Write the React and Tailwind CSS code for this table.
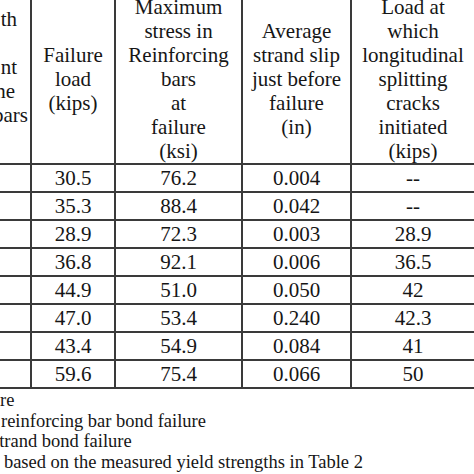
import React from "react";

const header = [
  ["Failure", "load", "(kips)"],
  ["Maximum", "stress in", "Reinforcing", "bars", "at", "failure", "(ksi)"],
  ["Average", "strand slip", "just before", "failure", "(in)"],
  ["Load at", "which", "longitudinal", "splitting", "cracks", "initiated", "(kips)"],
];

// tails of the first column, which runs off the left edge
const firstCol = [
  ["th", "pr-[13px]"],
  ["\u00a0", ""],
  ["nt", "pr-[13px]"],
  ["ne", "pr-[15px]"],
  ["bars", "pr-[2px]"],
  ["\u00a0", ""],
];

const rows = [
  ["30.5", "76.2", "0.004", "--"],
  ["35.3", "88.4", "0.042", "--"],
  ["28.9", "72.3", "0.003", "28.9"],
  ["36.8", "92.1", "0.006", "36.5"],
  ["44.9", "51.0", "0.050", "42"],
  ["47.0", "53.4", "0.240", "42.3"],
  ["43.4", "54.9", "0.084", "41"],
  ["59.6", "75.4", "0.066", "50"],
];

const cols = "grid grid-cols-[32px_84px_127px_109px_124px]";
const line = "border-[#3a3a3a]";

export default function App() {
  return (
    <div
      className="w-[474px] h-[474px] overflow-hidden bg-white text-[#161616]"
      style={{ fontFamily: '"Liberation Serif", "Times New Roman", serif' }}
    >
      <div className="w-[476px] mt-[-5px]">
        {/* header */}
        <div className={`${cols} h-[170px] text-[21px] leading-[24px]`}>
          <div className={`border-r-2 border-b-2 ${line} flex flex-col justify-center overflow-hidden`}>
            {firstCol.map(([t, pad], i) => (
              <div key={i} className={`flex justify-end whitespace-nowrap ${pad}`}>
                {t}
              </div>
            ))}
          </div>
          {header.map((lines, i) => (
            <div
              key={i}
              className={`border-r-2 border-b-2 ${line} flex flex-col items-center justify-center whitespace-nowrap`}
            >
              {lines.map((t, j) => (
                <div key={j}>{t}</div>
              ))}
            </div>
          ))}
        </div>

        {/* body */}
        {rows.map((r, i) => (
          <div key={i} className={`${cols} h-[28px] text-[21px] leading-[26px]`}>
            <div className={`border-r-2 border-b-2 ${line}`} />
            {r.map((v, j) => (
              <div key={j} className={`border-r-2 border-b-2 ${line} text-center`}>
                {v}
              </div>
            ))}
          </div>
        ))}
      </div>

      {/* notes */}
      <div className="text-[18.5px] leading-[20.5px] whitespace-nowrap pt-[1px]">
        <div>re</div>
        <div className="ml-[1px]">reinforcing bar bond failure</div>
        <div className="ml-[-8px]">strand bond failure</div>
        <div className="ml-[-10px]">d based on the measured yield strengths in Table 2</div>
      </div>
    </div>
  );
}
